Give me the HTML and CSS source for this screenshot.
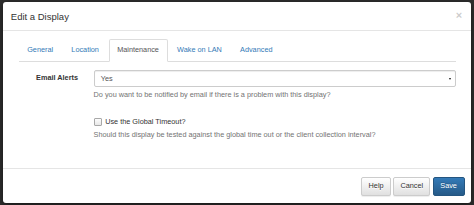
FILE: index.html
```html
<!DOCTYPE html>
<html>
<head>
<meta charset="utf-8">
<link rel="stylesheet" href="styles.css">
</head>
<body>
<div class="modal">
  <div class="modal-header">
    <h4 class="modal-title">Edit a Display</h4>
    <button class="close" type="button">×</button>
  </div>
  <div class="modal-body">
    <ul class="nav-tabs">
      <li><a>General</a></li>
      <li><a>Location</a></li>
      <li class="active"><a>Maintenance</a></li>
      <li><a>Wake on LAN</a></li>
      <li><a>Advanced</a></li>
    </ul>
    <div class="tab-content">
      <div class="form-group">
        <label class="control-label">Email Alerts</label>
        <div class="field">
          <div class="select">Yes<span class="caret"></span></div>
          <p class="help">Do you want to be notified by email if there is a problem with this display?</p>
        </div>
      </div>
      <div class="form-group">
        <div class="control-label"></div>
        <div class="field">
          <label class="checkbox"><span class="box"></span>Use the Global Timeout?</label>
          <p class="help">Should this display be tested against the global time out or the client collection interval?</p>
        </div>
      </div>
    </div>
  </div>
  <div class="modal-footer">
    <button class="btn btn-default" type="button">Help</button>
    <button class="btn btn-default" type="button">Cancel</button>
    <button class="btn btn-primary" type="button">Save</button>
  </div>
</div>
</body>
</html>
```
FILE: styles.css
```css
html, body {
  margin: 0;
  padding: 0;
}
body {
  background: #2e2e2e;
  font-family: "Liberation Sans", Arial, sans-serif;
  font-size: 7.3px;
  line-height: 10.4px;
  color: #333;
  height: 205px;
  overflow: hidden;
}
.modal {
  margin: 2px 3px 0 3px;
  width: 468px;
  background: #fff;
  border-radius: 3px;
  box-shadow: 0 2px 6px rgba(0, 0, 0, .5);
}
.modal-header {
  padding: 7.6px 7.8px 7.4px;
  border-bottom: 1px solid #e5e5e5;
  display: flex;
  justify-content: space-between;
  align-items: flex-start;
}
.modal-title {
  margin: 0;
  font-size: 9.5px;
  line-height: 13.4px;
  font-weight: 500;
  color: #333;
}
.close {
  padding: 0;
  border: 0;
  background: transparent;
  font-family: "Liberation Sans", Arial, sans-serif;
  font-size: 11px;
  line-height: 11px;
  font-weight: 700;
  color: #000;
  opacity: .2;
  margin-top: 0;
  margin-right: 1px;
}
.modal-body {
  padding: 7.8px 15px 0 15.6px;
  height: 129px;
}
.nav-tabs {
  list-style: none;
  margin: 0;
  padding: 0;
  display: flex;
  border-bottom: 1px solid #ddd;
}
.nav-tabs li {
  margin-bottom: -1px;
  margin-right: 1px;
}
.nav-tabs a {
  display: block;
  padding: 5.2px 7.6px;
  line-height: 10.4px;
  border: 1px solid transparent;
  border-radius: 2px 2px 0 0;
  color: #337ab7;
}
.nav-tabs .active a {
  color: #555;
  background: #fff;
  border-color: #ddd #ddd transparent;
}
.tab-content {
  padding-top: 7.8px;
}
.form-group {
  display: grid;
  grid-template-columns: 59.4px 1fr;
  column-gap: 15.6px;
  margin-bottom: 7.8px;
}
.control-label {
  text-align: right;
  font-weight: 700;
  padding-top: 3.6px;
  line-height: 10.4px;
}
.select {
  position: relative;
  height: 17.7px;
  box-sizing: border-box;
  border: 1px solid #ccc;
  border-radius: 2px;
  padding: 3.1px 6.2px;
  line-height: 10.4px;
  color: #555;
  box-shadow: inset 0 1px 1px rgba(0, 0, 0, .075);
}
.caret {
  position: absolute;
  right: 4px;
  top: 7.4px;
  width: 0;
  height: 0;
  border-left: 1.5px solid transparent;
  border-right: 1.5px solid transparent;
  border-top: 2.5px solid #111;
}
.help {
  margin: 2.6px 0 5.2px;
  color: #737373;
}
.checkbox {
  display: flex;
  align-items: center;
  padding-top: 3.6px;
  line-height: 10.4px;
  color: #333;
}
.box {
  width: 5.6px;
  height: 5.6px;
  border: 0.7px solid #a8a8a8;
  border-radius: 1px;
  background: linear-gradient(#fdfdfd, #e8e8e8);
  margin-right: 3.6px;
  margin-left: 0.4px;
}
.modal-footer {
  border-top: 1px solid #e5e5e5;
  padding: 7.8px 6.5px 7.6px 7.8px;
  display: flex;
  justify-content: flex-end;
  gap: 2.4px;
}
.btn {
  font-family: "Liberation Sans", Arial, sans-serif;
  font-size: 7.3px;
  line-height: 10.4px;
  padding: 3.1px 6.2px;
  border: 1px solid;
  border-radius: 2px;
  margin: 0;
}
.btn-default {
  color: #333;
  border-color: #ccc;
  background-image: linear-gradient(to bottom, #fff 0, #e0e0e0 100%);
  text-shadow: 0 1px 0 #fff;
  box-shadow: inset 0 1px 0 rgba(255, 255, 255, .15), 0 1px 1px rgba(0, 0, 0, .075);
}
.btn-primary {
  color: #fff;
  border-color: #245580;
  background-image: linear-gradient(to bottom, #337ab7 0, #265a88 100%);
  text-shadow: 0 -1px 0 rgba(0, 0, 0, .2);
  padding-left: 6.6px;
  padding-right: 6.6px;
}
```
